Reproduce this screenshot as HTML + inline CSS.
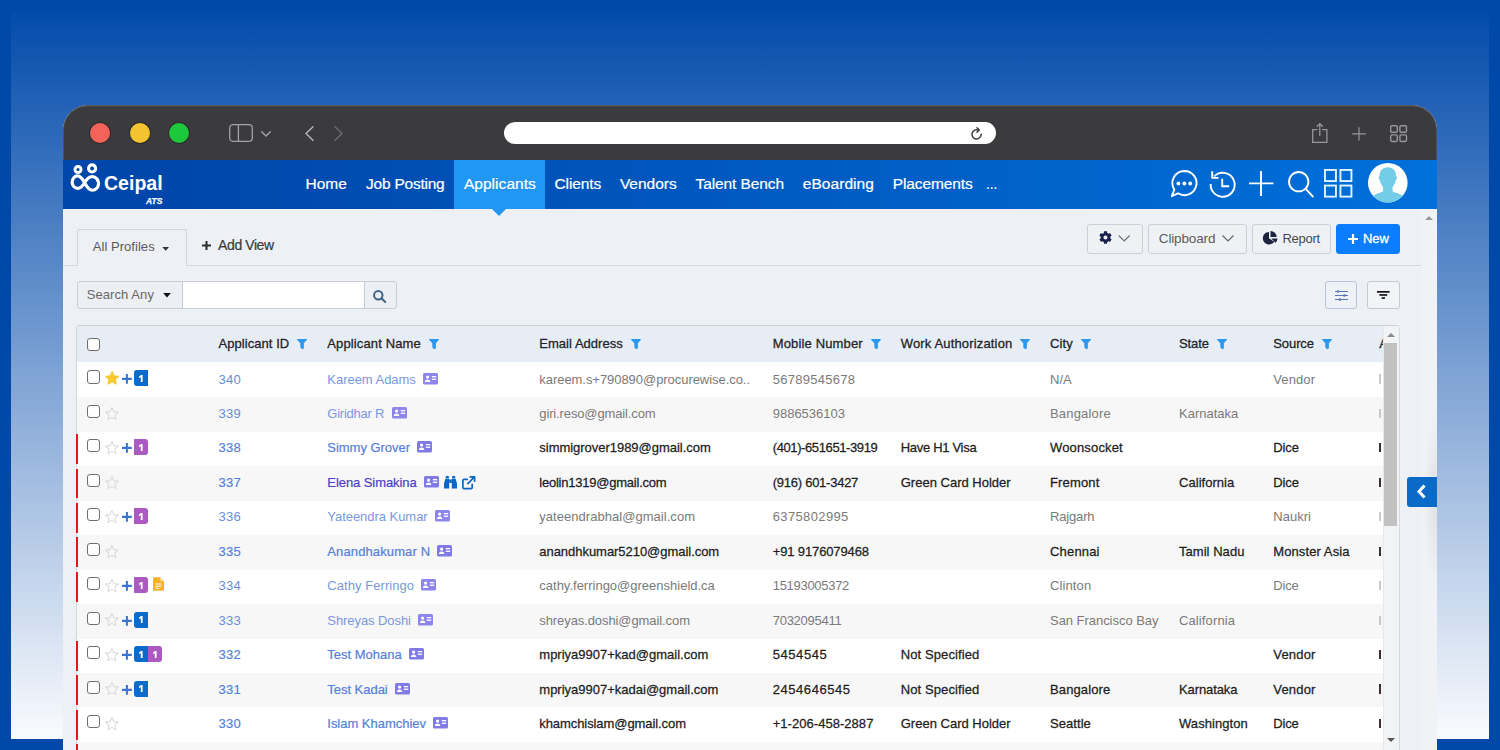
<!DOCTYPE html><html><head><meta charset="utf-8"><title>Ceipal ATS</title><style>
*{box-sizing:border-box;margin:0;padding:0}
html,body{width:1500px;height:750px;overflow:hidden;background:#0049A9;font-family:"Liberation Sans",sans-serif;}
.bg{position:absolute;left:11px;top:11px;width:1478px;height:728px;background:linear-gradient(180deg,#034BAB 0%,#FAFBFE 100%);}
.win{position:absolute;left:63px;top:105px;width:1374px;height:661px;border-radius:25px 25px 0 0;overflow:hidden;background:#EDF0F4;}
.pg{position:absolute;left:-63px;top:-105px;width:1500px;height:800px;}
.pg>*,.a{position:absolute}
.t{position:absolute;white-space:nowrap;}
.tb{left:63px;top:105px;width:1374px;height:55px;background:#3B3B3D;border-radius:25px 25px 0 0;box-shadow:inset 0 1.2px 0 0 #5A5A5E,inset 1px 0 0 0 #505054,inset -1px 0 0 0 #505054}
.dot{top:123px;width:20px;height:20px;border-radius:50%;box-shadow:0 0 0 1px rgba(0,0,0,.25)}
.url{left:504px;top:122px;width:492px;height:22.300px;border-radius:11.200px;background:#fff;}
.nav{left:63px;top:160px;width:1374px;height:49px;background:linear-gradient(90deg,#0047AB 0%,#0047AB 9%,#0070DA 100%);}
.act{left:454px;top:160px;width:91px;height:49px;background:#2196F3;}
.tri{left:492px;top:209px;width:0;height:0;border-left:7.5px solid transparent;border-right:7.5px solid transparent;border-top:7px solid #2196F3;}
.btn{border:1px solid #CBD0D6;border-radius:3px;background:#EFF2F5;height:29.5px;top:224px}
.hl{left:63px;top:265px;width:1358px;height:1px;background:#D5D9DE}
.tab{left:76.5px;top:229px;width:110.5px;height:37px;border:1px solid #D2D7DC;border-bottom:none;border-radius:3px 3px 0 0;background:#EDF0F4}
.sg{left:77px;top:281px;width:320px;height:28px;border:1px solid #C9CED5;border-radius:3px;background:#ECEFF3;overflow:hidden}
.tbl{left:76px;top:325px;width:1324px;height:440px;background:#fff;border-top:1px solid #C9D0D8;border-radius:4px 4px 0 0}
.th{left:76px;top:326px;width:1308px;height:36px;background:#E7EDF5;border-radius:3px 0 0 0}
.row{left:76px;width:1308px;}
.red{left:76px;width:2px;background:#F00F1C;z-index:2}
.cb{left:86.800px;width:13.200px;height:13.200px;border:1.400px solid #6E6E6E;border-radius:3px;background:#fff}
.bdg{width:13px;height:16px;border-radius:2px;color:#fff;font-size:10.5px;font-weight:bold;line-height:16px;text-align:center}
svg{position:absolute;overflow:visible}
</style></head><body>
<div class="bg"></div>
<div class="win"><div class="pg">
<div class="tb"></div>
<div class="dot" style="left:90.3px;background:#F4635A"></div>
<div class="dot" style="left:129.8px;background:#F4C430"></div>
<div class="dot" style="left:169.3px;background:#1EC83C"></div>
<svg style="left:229px;top:124px" width="24" height="18" viewBox="0 0 24 18" fill="none" stroke="#A3A3A5" stroke-width="1.3"><rect x="0.7" y="0.7" width="22.6" height="16.6" rx="3.2"/><path d="M9.4 0.7V17.3"/></svg>
<svg style="left:261px;top:130.5px" width="10" height="6" viewBox="0 0 10 6" fill="none" stroke="#A3A3A5" stroke-width="1.4" stroke-linecap="round" stroke-linejoin="round"><path d="M0.7 0.7L5 5L9.3 0.7"/></svg>
<svg style="left:305px;top:126px" width="9" height="15" viewBox="0 0 9 15" fill="none" stroke="#B4B4B6" stroke-width="1.5" stroke-linecap="round" stroke-linejoin="round"><path d="M8 0.8L1 7.5L8 14.2"/></svg>
<svg style="left:334px;top:126px" width="9" height="15" viewBox="0 0 9 15" fill="none" stroke="#6C6C6E" stroke-width="1.5" stroke-linecap="round" stroke-linejoin="round"><path d="M1 0.8L8 7.5L1 14.2"/></svg>
<div class="url"></div>
<svg style="left:970.900px;top:127.200px" width="12" height="13" viewBox="0 0 12 13" fill="none" stroke="#3E3E42" stroke-width="1.500" stroke-linecap="round"><path d="M10.2 7.3A4.6 4.6 0 1 1 7.6 3.2"/><path d="M6 0.8L8.3 3L6 5.2" stroke-linejoin="round"/></svg>
<svg style="left:1312.400px;top:122px" width="15.600" height="21" viewBox="0 0 15.600 21" fill="none" stroke="#98989A" stroke-width="1.300" stroke-linecap="round" stroke-linejoin="miter"><path d="M5 7.600H0.700V20.300H14.900V7.600H10.600"/><path d="M7.800 13.400V2M5.200 4.300L7.800 1.600L10.400 4.300" stroke-linejoin="round"/></svg>
<svg style="left:1352px;top:127px" width="14" height="13.600" viewBox="0 0 14 13.600" fill="none" stroke="#98989A" stroke-width="1.200" stroke-linecap="round"><path d="M7 0.500V13.100M0.500 6.800H13.500"/></svg>
<svg style="left:1390px;top:125px" width="17.200" height="17.200" viewBox="0 0 17.200 17.200" fill="none" stroke="#98989A" stroke-width="1.400"><rect x="0.700" y="0.700" width="6.600" height="6.600" rx="1.400"/><rect x="9.900" y="0.700" width="6.600" height="6.600" rx="1.400"/><rect x="0.700" y="9.900" width="6.600" height="6.600" rx="1.400"/><rect x="9.900" y="9.900" width="6.600" height="6.600" rx="1.400"/></svg>
<div class="nav"></div><div class="act"></div>
<svg style="left:70px;top:165px" width="32" height="28" viewBox="0 0 32 28" fill="none" stroke="#fff"><circle cx="8" cy="4.500" r="3.050" stroke-width="2.900"/><circle cx="22.100" cy="3.400" r="3.550" stroke-width="3.100"/><path d="M2.150 17.150C2.150 13.730 4.610 10.950 7.650 10.950C10.900 10.950 12.900 14.600 14.600 17.800C16.300 21 18.800 25.250 22.300 25.250C25.750 25.250 28.550 22.200 28.550 18.450C28.550 14.700 25.750 11.650 22.300 11.650C18.800 11.650 16.300 14.800 14.600 17.800C12.900 20.800 10.900 23.350 7.650 23.350C4.610 23.350 2.150 20.570 2.150 17.150Z" stroke-width="3.200"/></svg>
<span class="t" style="left:104.3px;transform:scaleX(0.930);transform-origin:0 0;top:171px;font-size:21px;line-height:23px;color:#fff;font-weight:bold;">Ceipal</span>
<span class="t" style="left:145.8px;transform:scaleX(0.891);transform-origin:0 0;top:195px;font-size:9.5px;line-height:11px;color:#fff;font-weight:bold;-webkit-text-stroke:0.25px #fff;font-style:italic;">ATS</span>
<span class="t" style="left:305.5px;letter-spacing:-0.01px;top:175px;font-size:15.5px;line-height:17px;color:#fff;-webkit-text-stroke:0.2px #fff;">Home</span>
<span class="t" style="left:366.0px;letter-spacing:-0.23px;top:175px;font-size:15.5px;line-height:17px;color:#fff;-webkit-text-stroke:0.2px #fff;">Job Posting</span>
<span class="t" style="left:463.9px;letter-spacing:0.05px;top:175px;font-size:15.5px;line-height:17px;color:#fff;-webkit-text-stroke:0.2px #fff;">Applicants</span>
<span class="t" style="left:554.5px;letter-spacing:-0.11px;top:175px;font-size:15.5px;line-height:17px;color:#fff;-webkit-text-stroke:0.2px #fff;">Clients</span>
<span class="t" style="left:619.9px;letter-spacing:-0.01px;top:175px;font-size:15.5px;line-height:17px;color:#fff;-webkit-text-stroke:0.2px #fff;">Vendors</span>
<span class="t" style="left:695.5px;letter-spacing:-0.10px;top:175px;font-size:15.5px;line-height:17px;color:#fff;-webkit-text-stroke:0.2px #fff;">Talent Bench</span>
<span class="t" style="left:802.7px;letter-spacing:0.07px;top:175px;font-size:15.5px;line-height:17px;color:#fff;-webkit-text-stroke:0.2px #fff;">eBoarding</span>
<span class="t" style="left:892.8px;letter-spacing:-0.11px;top:175px;font-size:15.5px;line-height:17px;color:#fff;-webkit-text-stroke:0.2px #fff;">Placements</span>
<span class="t" style="left:986.1px;transform:scaleX(0.867);transform-origin:0 0;top:175px;font-size:15.5px;line-height:17px;color:#fff;-webkit-text-stroke:0.2px #fff;">...</span>
<svg style="left:1171px;top:170px" width="27" height="27" viewBox="0 0 27 27" fill="none" stroke="#fff" stroke-width="1.9" stroke-linejoin="round"><path d="M13.500 1A12.100 12.100 0 1 1 6.900 23.300L0.800 26.200L3.300 19.600A12.100 12.100 0 0 1 13.500 1Z"/><circle cx="7.400" cy="13.500" r="1.900" fill="#fff" stroke="none"/><circle cx="13.300" cy="13.500" r="1.900" fill="#fff" stroke="none"/><circle cx="19.200" cy="13.500" r="1.900" fill="#fff" stroke="none"/></svg>
<svg style="left:1209px;top:169.800px" width="28" height="28" viewBox="0 0 28 28" fill="none" stroke="#fff" stroke-width="1.9" stroke-linecap="butt" stroke-linejoin="miter"><path d="M5.200 6.300A12 12 0 1 1 1.700 14"/><path d="M3.200 1.300V7.900H9.600"/><path d="M13.200 8.800V16.300H20.200"/></svg>
<svg style="left:1249px;top:171.200px" width="24.500" height="25" viewBox="0 0 24.500 25" fill="none" stroke="#fff" stroke-width="1.9"><path d="M12 0V25M0 12.400H24.500"/></svg>
<svg style="left:1287.500px;top:170.500px" width="26" height="27" viewBox="0 0 26 27" fill="none" stroke="#fff" stroke-width="1.900" stroke-linecap="round"><circle cx="10.700" cy="10.700" r="9.700"/><path d="M17.700 17.900L24.800 25.500"/></svg>
<svg style="left:1324px;top:169.300px" width="28.400" height="28.600" viewBox="0 0 28.400 28.600" fill="none" stroke="#E2F4FF" stroke-width="1.900"><rect x="0.950" y="0.950" width="11" height="11.100"/><rect x="16.450" y="0.950" width="11" height="11.100"/><rect x="0.950" y="16.550" width="11" height="11.100"/><rect x="16.450" y="16.550" width="11" height="11.100"/></svg>
<svg style="left:1367.500px;top:163px" width="39.600" height="39.600" viewBox="0 0 40 40"><defs><clipPath id="av"><circle cx="20" cy="20" r="20"/></clipPath></defs><circle cx="20" cy="20" r="20" fill="#fff"/><g clip-path="url(#av)" fill="#74CDE7"><path d="M20 4.200C25.600 4.200 28.300 8 28.300 13.200C29.600 13.600 29.400 16.600 28 17.400C27.500 21 25.800 23.300 24.800 24.200V28.600C27.200 30.400 32.500 30.800 35.400 33.600L38 42H2L4.600 33.600C7.500 30.800 12.800 30.400 15.200 28.600V24.200C14.200 23.300 12.500 21 12 17.400C10.600 16.600 10.400 13.600 11.700 13.200C11.700 8 14.400 4.200 20 4.200Z"/></g></svg>
<div class="tri"></div>
<div style="left:1421px;top:209px;width:16px;height:560px;background:#F0F2F5"></div>
<svg style="left:1424.5px;top:216px" width="8" height="4" viewBox="0 0 8 4"><path d="M0 4L4 0L8 4Z" fill="#9A9A9A"/></svg>
<div class="hl"></div>
<div class="tab"></div>
<span class="t" style="left:92.8px;letter-spacing:0.04px;top:239px;font-size:13px;line-height:15px;color:#5A5A5A;">All Profiles</span>
<svg style="left:162.400px;top:246.600px" width="7.400" height="3.800" viewBox="0 0 7 4"><path d="M0 0H7L3.500 4Z" fill="#333"/></svg>
<svg style="left:202.300px;top:241px" width="9" height="9" viewBox="0 0 10 10" stroke="#2E2E2E" stroke-width="2.300"><path d="M5 0V10M0 5H10"/></svg>
<span class="t" style="left:218.1px;letter-spacing:-0.42px;top:237px;font-size:14px;line-height:16px;color:#3A3A3A;-webkit-text-stroke:0.2px #3A3A3A;">Add View</span>
<div class="btn" style="left:1087px;width:56px"></div>
<div class="btn" style="left:1148px;width:99px"></div>
<div class="btn" style="left:1252px;width:79px"></div>
<div class="btn" style="left:1336px;width:64px;background:#0D7DFF;border-color:#0D7DFF"></div>
<svg style="left:1098.600px;top:230.900px" width="13" height="13" viewBox="0 0 512 512"><path fill="#17214A" d="M487.400 315.700l-42.600-24.600c4.300-23.200 4.300-47 0-70.200l42.600-24.600c4.900-2.800 7.100-8.600 5.500-14-11.100-35.600-30-67.800-54.700-94.600-3.800-4.100-10-5.100-14.800-2.300L380.800 110c-17.900-15.400-38.500-27.300-60.800-35.100V25.800c0-5.600-3.900-10.500-9.400-11.700-36.700-8.200-74.300-7.800-109.200 0-5.500 1.200-9.400 6.100-9.400 11.700V75c-22.200 7.900-42.800 19.800-60.800 35.100L88.700 85.500c-4.900-2.800-11-1.900-14.800 2.300-24.700 26.700-43.600 58.900-54.700 94.600-1.700 5.400.6 11.200 5.500 14L67.300 221c-4.300 23.200-4.300 47 0 70.200l-42.600 24.600c-4.900 2.800-7.100 8.600-5.500 14 11.100 35.600 30 67.800 54.700 94.600 3.800 4.100 10 5.100 14.800 2.300l42.600-24.600c17.900 15.400 38.500 27.300 60.800 35.100v49.200c0 5.600 3.900 10.500 9.400 11.700 36.700 8.200 74.300 7.800 109.200 0 5.500-1.200 9.400-6.100 9.400-11.700v-49.200c22.200-7.900 42.800-19.800 60.800-35.100l42.600 24.600c4.900 2.800 11 1.900 14.800-2.300 24.700-26.700 43.600-58.900 54.700-94.600 1.500-5.500-.7-11.300-5.600-14.100zM256 336c-44.100 0-80-35.900-80-80s35.900-80 80-80 80 35.900 80 80-35.900 80-80 80z"/></svg>
<svg style="left:1117.700px;top:234.800px" width="12.400" height="7" viewBox="0 0 12 7" fill="none" stroke="#707070" stroke-width="1.2"><path d="M0.500 0.500L6 6L11.500 0.500"/></svg>
<span class="t" style="left:1158.8px;letter-spacing:-0.14px;top:231px;font-size:13.5px;line-height:15px;color:#5C5C5C;">Clipboard</span>
<svg style="left:1222px;top:235px" width="12" height="7" viewBox="0 0 12 7" fill="none" stroke="#666" stroke-width="1.2"><path d="M0.500 0.500L6 6L11.500 0.500"/></svg>
<svg style="left:1263px;top:231px" width="14.500" height="13.500" viewBox="0 0 29 27"><g fill="#1E2340"><path d="M12 2A12.500 12.500 0 1 0 22.500 21.500L12 14.500Z"/><path d="M15 0V12H27.500A12.500 12.500 0 0 0 15 0Z"/><path d="M16.500 15H29A12.500 12.500 0 0 1 25 23.500Z"/></g></svg>
<span class="t" style="left:1282.4px;letter-spacing:-0.24px;top:231px;font-size:13px;line-height:15px;color:#484848;">Report</span>
<svg style="left:1347.5px;top:234px" width="10" height="10" viewBox="0 0 10 10" stroke="#fff" stroke-width="2.2"><path d="M5 0V10M0 5H10"/></svg>
<span class="t" style="left:1363.0px;transform:scaleX(0.961);transform-origin:0 0;top:231px;font-size:13.5px;line-height:15px;color:#fff;-webkit-text-stroke:0.3px #fff;">New</span>
<div class="sg"><div class="a" style="left:103.500px;top:-1px;width:183.500px;height:28px;background:#fff;border:1px solid #C4CAD2"></div></div>
<span class="t" style="left:86.7px;letter-spacing:0.08px;top:287px;font-size:13px;line-height:15px;color:#686868;">Search Any</span>
<svg style="left:162.500px;top:292.800px" width="8" height="4.400" viewBox="0 0 7 4"><path d="M0 0H7L3.500 4Z" fill="#111"/></svg>
<svg style="left:372.5px;top:290.3px" width="13.500" height="13" viewBox="0 0 13.500 13" fill="none" stroke="#3F6488" stroke-width="2" stroke-linecap="round"><circle cx="5.300" cy="5.300" r="4.200"/><path d="M8.600 8.500L12.300 12"/></svg>
<div class="btn" style="left:1325px;top:281px;width:32px;height:28px;border-color:#B9C2D6;background:#EEF1F6"></div>
<div class="btn" style="left:1367px;top:281px;width:33px;height:28px;border-color:#C4C9D2;background:#F2F4F7"></div>
<svg style="left:1335px;top:289.500px" width="13" height="11" viewBox="0 0 13 11" fill="none" stroke="#5876B4" stroke-width="1"><path d="M0 1.500H13M0 5.500H13M0 9.500H13"/><rect x="2" y="0.300" width="1.800" height="2.400" fill="#5876B4" stroke="none"/><rect x="8.500" y="4.300" width="1.800" height="2.400" fill="#5876B4" stroke="none"/><rect x="4" y="8.300" width="1.800" height="2.400" fill="#5876B4" stroke="none"/></svg>
<svg style="left:1377.300px;top:291.200px" width="12.600" height="8" viewBox="0 0 13 9" preserveAspectRatio="none" fill="#111"><rect x="0" y="0" width="13" height="1.900"/><rect x="2.500" y="3.500" width="8" height="1.900"/><rect x="4.800" y="7" width="3.400" height="1.900"/></svg>
<div class="tbl"></div><div class="th"></div>
<div class="cb" style="top:338px"></div>
<span class="t" style="left:218.5px;letter-spacing:0.06px;top:336px;font-size:13px;line-height:15px;color:#1F2328;-webkit-text-stroke:0.28px #1F2328;">Applicant ID</span>
<svg style="left:297.2px;top:338.7px" width="10" height="10.200" viewBox="0 0 10 10.200"><path d="M0.500 0H9.500Q10.400 0.100 9.700 1L6.900 4.300V9.300L5.700 10.200Q3.300 9 3.300 8.200V4.300L0.300 1Q-0.400 0.100 0.500 0Z" fill="#2B97EE"/></svg>
<span class="t" style="left:327.3px;letter-spacing:0.13px;top:336px;font-size:13px;line-height:15px;color:#1F2328;-webkit-text-stroke:0.28px #1F2328;">Applicant Name</span>
<svg style="left:428.7px;top:338.7px" width="10" height="10.200" viewBox="0 0 10 10.200"><path d="M0.500 0H9.500Q10.400 0.100 9.700 1L6.900 4.300V9.300L5.700 10.200Q3.300 9 3.300 8.200V4.300L0.300 1Q-0.400 0.100 0.500 0Z" fill="#2B97EE"/></svg>
<span class="t" style="left:539.3px;letter-spacing:0.03px;top:336px;font-size:13px;line-height:15px;color:#1F2328;-webkit-text-stroke:0.28px #1F2328;">Email Address</span>
<svg style="left:630.7px;top:338.7px" width="10" height="10.200" viewBox="0 0 10 10.200"><path d="M0.500 0H9.500Q10.400 0.100 9.700 1L6.900 4.300V9.300L5.700 10.200Q3.300 9 3.300 8.200V4.300L0.300 1Q-0.400 0.100 0.500 0Z" fill="#2B97EE"/></svg>
<span class="t" style="left:772.7px;letter-spacing:0.15px;top:336px;font-size:13px;line-height:15px;color:#1F2328;-webkit-text-stroke:0.28px #1F2328;">Mobile Number</span>
<svg style="left:870.7px;top:338.7px" width="10" height="10.200" viewBox="0 0 10 10.200"><path d="M0.500 0H9.500Q10.400 0.100 9.700 1L6.900 4.300V9.300L5.700 10.200Q3.300 9 3.300 8.200V4.300L0.300 1Q-0.400 0.100 0.500 0Z" fill="#2B97EE"/></svg>
<span class="t" style="left:900.7px;letter-spacing:0.16px;top:336px;font-size:13px;line-height:15px;color:#1F2328;-webkit-text-stroke:0.28px #1F2328;">Work Authorization</span>
<svg style="left:1020.2px;top:338.7px" width="10" height="10.200" viewBox="0 0 10 10.200"><path d="M0.500 0H9.500Q10.400 0.100 9.700 1L6.900 4.300V9.300L5.700 10.200Q3.300 9 3.300 8.200V4.300L0.300 1Q-0.400 0.100 0.500 0Z" fill="#2B97EE"/></svg>
<span class="t" style="left:1050.0px;letter-spacing:0.10px;top:336px;font-size:13px;line-height:15px;color:#1F2328;-webkit-text-stroke:0.28px #1F2328;">City</span>
<svg style="left:1080.7px;top:338.7px" width="10" height="10.200" viewBox="0 0 10 10.200"><path d="M0.500 0H9.500Q10.400 0.100 9.700 1L6.900 4.300V9.300L5.700 10.200Q3.300 9 3.300 8.200V4.300L0.300 1Q-0.400 0.100 0.500 0Z" fill="#2B97EE"/></svg>
<span class="t" style="left:1179.0px;letter-spacing:-0.09px;top:336px;font-size:13px;line-height:15px;color:#1F2328;-webkit-text-stroke:0.28px #1F2328;">State</span>
<svg style="left:1216.8px;top:338.7px" width="10" height="10.200" viewBox="0 0 10 10.200"><path d="M0.500 0H9.500Q10.400 0.100 9.700 1L6.900 4.300V9.300L5.700 10.200Q3.300 9 3.300 8.200V4.300L0.300 1Q-0.400 0.100 0.500 0Z" fill="#2B97EE"/></svg>
<span class="t" style="left:1273.3px;letter-spacing:-0.10px;top:336px;font-size:13px;line-height:15px;color:#1F2328;-webkit-text-stroke:0.28px #1F2328;">Source</span>
<svg style="left:1321.8px;top:338.7px" width="10" height="10.200" viewBox="0 0 10 10.200"><path d="M0.500 0H9.500Q10.400 0.100 9.700 1L6.900 4.300V9.300L5.700 10.200Q3.300 9 3.300 8.200V4.300L0.300 1Q-0.400 0.100 0.500 0Z" fill="#2B97EE"/></svg>
<span class="t" style="left:1379.3px;letter-spacing:0.00px;top:336px;font-size:13px;line-height:15px;color:#1F2328;-webkit-text-stroke:0.28px #1F2328;">A</span>
<div class="row" style="top:362.00px;height:35.85px;background:#fff"></div>
<div class="cb" style="top:370.4px"></div>
<svg style="left:104.900px;top:371.4px" width="14.300" height="13.800" viewBox="0 0 14 13.400"><path d="M7 0.6L8.900 4.700L13.400 5.200L10.100 8.300L11 12.800L7 10.500L3 12.800L3.900 8.300L0.600 5.200L5.100 4.700Z" fill="#F7CA33" stroke="#F7CA33" stroke-width="1.100" stroke-linejoin="round"/></svg>
<svg style="left:122px;top:374.4px" width="9.800" height="9.800" viewBox="0 0 10 10" stroke="#3A74D2" stroke-width="2.100"><path d="M5 0V10M0 5H10"/></svg>
<div class="bdg a" style="left:134.3px;top:370.4px;width:13.8px;background:#0A6BCB;border-radius:3px 0 0 3px"><svg style="left:5.10px;top:4.600px" width="3.600" height="6.900" viewBox="0 0 3.600 6.900"><path d="M1.900 0H3.600V6.900H1.800V2.300L0 3V1.400Q1.300 0.900 1.900 0Z" fill="#fff"/></svg></div>
<span class="t" style="left:218.5px;letter-spacing:0.26px;top:372px;font-size:13px;line-height:15px;color:#6A8CD9;">340</span>
<span class="t" style="left:327.3px;letter-spacing:-0.03px;top:372px;font-size:13px;line-height:15px;color:#7A98DE;">Kareem Adams</span>
<svg style="left:423.2px;top:372.5px" width="15" height="11.500" viewBox="0 0 15 11.500"><rect width="15" height="11.500" rx="1.600" fill="#8D86EA"/><circle cx="4.600" cy="4.100" r="1.600" fill="#fff"/><path d="M1.900 8.900Q1.900 6.400 4.600 6.400Q7.300 6.400 7.300 8.900Z" fill="#fff"/><rect x="8.800" y="3" width="4.400" height="1.300" fill="#fff"/><rect x="8.800" y="5.600" width="4.400" height="1.300" fill="#fff"/><rect x="8.800" y="8" width="3" height="1" fill="#fff" opacity="0"/></svg>
<span class="t" style="left:539.3px;letter-spacing:-0.05px;top:372px;font-size:13px;line-height:15px;color:#7A7A7A;">kareem.s+790890@procurewise.co..</span>
<span class="t" style="left:772.7px;letter-spacing:0.28px;top:372px;font-size:13px;line-height:15px;color:#7A7A7A;">56789545678</span>
<span class="t" style="left:1050.0px;letter-spacing:0.01px;top:372px;font-size:13px;line-height:15px;color:#7A7A7A;">N/A</span>
<span class="t" style="left:1273.3px;letter-spacing:0.10px;top:372px;font-size:13px;line-height:15px;color:#7A7A7A;">Vendor</span>
<div class="a" style="left:1379.300px;top:374.3px;width:2.200px;height:9.300px;background:#c9c9c9"></div>
<div class="row" style="top:397.35px;height:34.95px;background:#F7F7F7"></div>
<div class="cb" style="top:404.8px"></div>
<svg style="left:105.200px;top:406.7px" width="13.800" height="13.200" viewBox="0 0 14 13.400"><path d="M7 0.6L8.900 4.700L13.400 5.200L10.100 8.300L11 12.800L7 10.500L3 12.800L3.900 8.300L0.600 5.200L5.100 4.700Z" fill="none" stroke="#D9D9D9" stroke-width="1.050" stroke-linejoin="round"/></svg>
<span class="t" style="left:218.5px;letter-spacing:0.26px;top:406px;font-size:13px;line-height:15px;color:#6A8CD9;">339</span>
<span class="t" style="left:327.3px;letter-spacing:-0.25px;top:406px;font-size:13px;line-height:15px;color:#7A98DE;">Giridhar R</span>
<svg style="left:391.6px;top:406.9px" width="15" height="11.500" viewBox="0 0 15 11.500"><rect width="15" height="11.500" rx="1.600" fill="#8D86EA"/><circle cx="4.600" cy="4.100" r="1.600" fill="#fff"/><path d="M1.900 8.900Q1.900 6.400 4.600 6.400Q7.300 6.400 7.300 8.900Z" fill="#fff"/><rect x="8.800" y="3" width="4.400" height="1.300" fill="#fff"/><rect x="8.800" y="5.600" width="4.400" height="1.300" fill="#fff"/><rect x="8.800" y="8" width="3" height="1" fill="#fff" opacity="0"/></svg>
<span class="t" style="left:539.3px;letter-spacing:-0.13px;top:406px;font-size:13px;line-height:15px;color:#7A7A7A;">giri.reso@gmail.com</span>
<span class="t" style="left:772.7px;letter-spacing:0.00px;top:406px;font-size:13px;line-height:15px;color:#7A7A7A;">9886536103</span>
<span class="t" style="left:1050.0px;letter-spacing:0.18px;top:406px;font-size:13px;line-height:15px;color:#7A7A7A;">Bangalore</span>
<span class="t" style="left:1179.0px;letter-spacing:0.00px;top:406px;font-size:13px;line-height:15px;color:#7A7A7A;">Karnataka</span>
<div class="a" style="left:1379.300px;top:408.7px;width:2.200px;height:9.300px;background:#c9c9c9"></div>
<div class="row" style="top:431.80px;height:34.95px;background:#fff"></div>
<div class="red" style="top:434.10px;height:29.85px"></div>
<div class="cb" style="top:439.3px"></div>
<svg style="left:105.200px;top:441.2px" width="13.800" height="13.200" viewBox="0 0 14 13.400"><path d="M7 0.6L8.900 4.700L13.400 5.200L10.100 8.300L11 12.800L7 10.500L3 12.800L3.900 8.300L0.600 5.200L5.100 4.700Z" fill="none" stroke="#D9D9D9" stroke-width="1.050" stroke-linejoin="round"/></svg>
<svg style="left:122px;top:443.3px" width="9.800" height="9.800" viewBox="0 0 10 10" stroke="#3A74D2" stroke-width="2.100"><path d="M5 0V10M0 5H10"/></svg>
<div class="bdg a" style="left:134.3px;top:439.3px;width:13.8px;background:#AC5AC2;border-radius:0 3px 3px 0"><svg style="left:5.10px;top:4.600px" width="3.600" height="6.900" viewBox="0 0 3.600 6.900"><path d="M1.900 0H3.600V6.900H1.800V2.300L0 3V1.400Q1.300 0.900 1.900 0Z" fill="#fff"/></svg></div>
<span class="t" style="left:218.5px;letter-spacing:0.26px;top:440px;font-size:13px;line-height:15px;color:#5580D8;-webkit-text-stroke:0.156px #5580D8;">338</span>
<span class="t" style="left:327.3px;letter-spacing:-0.03px;top:440px;font-size:13px;line-height:15px;color:#5580D8;-webkit-text-stroke:0.20800000000000002px #5580D8;">Simmy Grover</span>
<svg style="left:417.3px;top:441.4px" width="15" height="11.500" viewBox="0 0 15 11.500"><rect width="15" height="11.500" rx="1.600" fill="#7F7AE6"/><circle cx="4.600" cy="4.100" r="1.600" fill="#fff"/><path d="M1.900 8.900Q1.900 6.400 4.600 6.400Q7.300 6.400 7.300 8.900Z" fill="#fff"/><rect x="8.800" y="3" width="4.400" height="1.300" fill="#fff"/><rect x="8.800" y="5.600" width="4.400" height="1.300" fill="#fff"/><rect x="8.800" y="8" width="3" height="1" fill="#fff" opacity="0"/></svg>
<span class="t" style="left:539.3px;letter-spacing:-0.03px;top:440px;font-size:13px;line-height:15px;color:#1E1E1E;-webkit-text-stroke:0.26px #1E1E1E;">simmigrover1989@gmail.com</span>
<span class="t" style="left:772.7px;letter-spacing:-0.39px;top:440px;font-size:13px;line-height:15px;color:#1E1E1E;-webkit-text-stroke:0.26px #1E1E1E;">(401)-651651-3919</span>
<span class="t" style="left:900.7px;letter-spacing:-0.30px;top:440px;font-size:13px;line-height:15px;color:#1E1E1E;-webkit-text-stroke:0.26px #1E1E1E;">Have H1 Visa</span>
<span class="t" style="left:1050.0px;letter-spacing:0.16px;top:440px;font-size:13px;line-height:15px;color:#1E1E1E;-webkit-text-stroke:0.26px #1E1E1E;">Woonsocket</span>
<span class="t" style="left:1273.3px;letter-spacing:-0.10px;top:440px;font-size:13px;line-height:15px;color:#1E1E1E;-webkit-text-stroke:0.26px #1E1E1E;">Dice</span>
<div class="a" style="left:1379.300px;top:443.2px;width:2.200px;height:9.300px;background:#3a2f33"></div>
<div class="row" style="top:466.25px;height:34.95px;background:#F7F7F7"></div>
<div class="red" style="top:468.55px;height:29.85px"></div>
<div class="cb" style="top:473.8px"></div>
<svg style="left:105.200px;top:475.6px" width="13.800" height="13.200" viewBox="0 0 14 13.400"><path d="M7 0.6L8.900 4.700L13.400 5.200L10.100 8.300L11 12.800L7 10.500L3 12.800L3.900 8.300L0.600 5.200L5.100 4.700Z" fill="none" stroke="#D9D9D9" stroke-width="1.050" stroke-linejoin="round"/></svg>
<span class="t" style="left:218.5px;letter-spacing:0.26px;top:475px;font-size:13px;line-height:15px;color:#5580D8;-webkit-text-stroke:0.156px #5580D8;">337</span>
<span class="t" style="left:327.3px;letter-spacing:-0.07px;top:475px;font-size:13px;line-height:15px;color:#4E3DCB;-webkit-text-stroke:0.20800000000000002px #4E3DCB;">Elena Simakina</span>
<svg style="left:424.0px;top:475.9px" width="15" height="11.500" viewBox="0 0 15 11.500"><rect width="15" height="11.500" rx="1.600" fill="#7F7AE6"/><circle cx="4.600" cy="4.100" r="1.600" fill="#fff"/><path d="M1.900 8.900Q1.900 6.400 4.600 6.400Q7.300 6.400 7.300 8.900Z" fill="#fff"/><rect x="8.800" y="3" width="4.400" height="1.300" fill="#fff"/><rect x="8.800" y="5.600" width="4.400" height="1.300" fill="#fff"/><rect x="8.800" y="8" width="3" height="1" fill="#fff" opacity="0"/></svg>
<svg style="left:444px;top:476.1px" width="13" height="12.500" viewBox="0 0 13 12.500" fill="#0A66C2"><rect x="1.800" y="0" width="3" height="2"/><rect x="8.200" y="0" width="3" height="2"/><path d="M1.500 2.500H5.200V12.500H0V7.500Z"/><path d="M7.800 2.500H11.500L13 7.500V12.500H7.800Z"/><rect x="5.200" y="3.500" width="2.600" height="3.500"/></svg>
<svg style="left:462.300px;top:475.6px" width="13.500" height="13.500" viewBox="0 0 13.500 13.500" fill="none" stroke="#0A66C2" stroke-width="1.700" stroke-linecap="round" stroke-linejoin="round"><path d="M10.200 8.300V11.400Q10.200 12.600 9 12.600H2.100Q0.900 12.600 0.900 11.400V4.500Q0.900 3.300 2.100 3.300H5.200"/><path d="M8.300 0.900H12.600V5.200M12.300 1.200L5.800 7.700"/></svg>
<span class="t" style="left:539.3px;letter-spacing:-0.23px;top:475px;font-size:13px;line-height:15px;color:#1E1E1E;-webkit-text-stroke:0.26px #1E1E1E;">leolin1319@gmail.com</span>
<span class="t" style="left:772.7px;letter-spacing:-0.25px;top:475px;font-size:13px;line-height:15px;color:#1E1E1E;-webkit-text-stroke:0.26px #1E1E1E;">(916) 601-3427</span>
<span class="t" style="left:900.7px;letter-spacing:0.01px;top:475px;font-size:13px;line-height:15px;color:#1E1E1E;-webkit-text-stroke:0.26px #1E1E1E;">Green Card Holder</span>
<span class="t" style="left:1050.0px;letter-spacing:0.15px;top:475px;font-size:13px;line-height:15px;color:#1E1E1E;-webkit-text-stroke:0.26px #1E1E1E;">Fremont</span>
<span class="t" style="left:1179.0px;letter-spacing:0.04px;top:475px;font-size:13px;line-height:15px;color:#1E1E1E;-webkit-text-stroke:0.26px #1E1E1E;">California</span>
<span class="t" style="left:1273.3px;letter-spacing:-0.10px;top:475px;font-size:13px;line-height:15px;color:#1E1E1E;-webkit-text-stroke:0.26px #1E1E1E;">Dice</span>
<div class="a" style="left:1379.300px;top:477.6px;width:2.200px;height:9.300px;background:#3a2f33"></div>
<div class="row" style="top:500.70px;height:34.95px;background:#fff"></div>
<div class="red" style="top:503.00px;height:29.85px"></div>
<div class="cb" style="top:508.2px"></div>
<svg style="left:105.200px;top:510.1px" width="13.800" height="13.200" viewBox="0 0 14 13.400"><path d="M7 0.6L8.900 4.700L13.400 5.200L10.100 8.300L11 12.800L7 10.500L3 12.800L3.900 8.300L0.600 5.200L5.100 4.700Z" fill="none" stroke="#D9D9D9" stroke-width="1.050" stroke-linejoin="round"/></svg>
<svg style="left:122px;top:512.2px" width="9.800" height="9.800" viewBox="0 0 10 10" stroke="#3A74D2" stroke-width="2.100"><path d="M5 0V10M0 5H10"/></svg>
<div class="bdg a" style="left:134.3px;top:508.2px;width:13.8px;background:#AC5AC2;border-radius:0 3px 3px 0"><svg style="left:5.10px;top:4.600px" width="3.600" height="6.900" viewBox="0 0 3.600 6.900"><path d="M1.900 0H3.600V6.900H1.800V2.300L0 3V1.400Q1.300 0.900 1.900 0Z" fill="#fff"/></svg></div>
<span class="t" style="left:218.5px;letter-spacing:0.26px;top:509px;font-size:13px;line-height:15px;color:#6A8CD9;">336</span>
<span class="t" style="left:327.3px;letter-spacing:-0.04px;top:509px;font-size:13px;line-height:15px;color:#7A98DE;">Yateendra Kumar</span>
<svg style="left:435.0px;top:510.3px" width="15" height="11.500" viewBox="0 0 15 11.500"><rect width="15" height="11.500" rx="1.600" fill="#8D86EA"/><circle cx="4.600" cy="4.100" r="1.600" fill="#fff"/><path d="M1.900 8.900Q1.900 6.400 4.600 6.400Q7.300 6.400 7.300 8.900Z" fill="#fff"/><rect x="8.800" y="3" width="4.400" height="1.300" fill="#fff"/><rect x="8.800" y="5.600" width="4.400" height="1.300" fill="#fff"/><rect x="8.800" y="8" width="3" height="1" fill="#fff" opacity="0"/></svg>
<span class="t" style="left:539.3px;letter-spacing:0.04px;top:509px;font-size:13px;line-height:15px;color:#7A7A7A;">yateendrabhal@gmail.com</span>
<span class="t" style="left:772.7px;letter-spacing:0.37px;top:509px;font-size:13px;line-height:15px;color:#7A7A7A;">6375802995</span>
<span class="t" style="left:1050.0px;letter-spacing:-0.16px;top:509px;font-size:13px;line-height:15px;color:#7A7A7A;">Rajgarh</span>
<span class="t" style="left:1273.3px;letter-spacing:0.03px;top:509px;font-size:13px;line-height:15px;color:#7A7A7A;">Naukri</span>
<div class="a" style="left:1379.300px;top:512.1px;width:2.200px;height:9.300px;background:#c9c9c9"></div>
<div class="row" style="top:535.15px;height:34.95px;background:#F7F7F7"></div>
<div class="red" style="top:537.45px;height:29.85px"></div>
<div class="cb" style="top:542.6px"></div>
<svg style="left:105.200px;top:544.5px" width="13.800" height="13.200" viewBox="0 0 14 13.400"><path d="M7 0.6L8.900 4.700L13.400 5.200L10.100 8.300L11 12.800L7 10.500L3 12.800L3.900 8.300L0.600 5.200L5.100 4.700Z" fill="none" stroke="#D9D9D9" stroke-width="1.050" stroke-linejoin="round"/></svg>
<span class="t" style="left:218.5px;letter-spacing:0.26px;top:544px;font-size:13px;line-height:15px;color:#5580D8;-webkit-text-stroke:0.156px #5580D8;">335</span>
<span class="t" style="left:327.3px;letter-spacing:0.12px;top:544px;font-size:13px;line-height:15px;color:#5580D8;-webkit-text-stroke:0.20800000000000002px #5580D8;">Anandhakumar N</span>
<svg style="left:437.3px;top:544.8px" width="15" height="11.500" viewBox="0 0 15 11.500"><rect width="15" height="11.500" rx="1.600" fill="#7F7AE6"/><circle cx="4.600" cy="4.100" r="1.600" fill="#fff"/><path d="M1.900 8.900Q1.900 6.400 4.600 6.400Q7.300 6.400 7.300 8.900Z" fill="#fff"/><rect x="8.800" y="3" width="4.400" height="1.300" fill="#fff"/><rect x="8.800" y="5.600" width="4.400" height="1.300" fill="#fff"/><rect x="8.800" y="8" width="3" height="1" fill="#fff" opacity="0"/></svg>
<span class="t" style="left:539.3px;letter-spacing:-0.04px;top:544px;font-size:13px;line-height:15px;color:#1E1E1E;-webkit-text-stroke:0.26px #1E1E1E;">anandhkumar5210@gmail.com</span>
<span class="t" style="left:772.7px;letter-spacing:-0.13px;top:544px;font-size:13px;line-height:15px;color:#1E1E1E;-webkit-text-stroke:0.26px #1E1E1E;">+91 9176079468</span>
<span class="t" style="left:1050.0px;letter-spacing:0.18px;top:544px;font-size:13px;line-height:15px;color:#1E1E1E;-webkit-text-stroke:0.26px #1E1E1E;">Chennai</span>
<span class="t" style="left:1179.0px;letter-spacing:0.04px;top:544px;font-size:13px;line-height:15px;color:#1E1E1E;-webkit-text-stroke:0.26px #1E1E1E;">Tamil Nadu</span>
<span class="t" style="left:1273.3px;letter-spacing:0.09px;top:544px;font-size:13px;line-height:15px;color:#1E1E1E;-webkit-text-stroke:0.26px #1E1E1E;">Monster Asia</span>
<div class="a" style="left:1379.300px;top:546.6px;width:2.200px;height:9.300px;background:#3a2f33"></div>
<div class="row" style="top:569.60px;height:34.95px;background:#fff"></div>
<div class="red" style="top:571.90px;height:29.85px"></div>
<div class="cb" style="top:577.1px"></div>
<svg style="left:105.200px;top:579.0px" width="13.800" height="13.200" viewBox="0 0 14 13.400"><path d="M7 0.6L8.900 4.700L13.400 5.200L10.100 8.300L11 12.800L7 10.500L3 12.800L3.900 8.300L0.600 5.200L5.100 4.700Z" fill="none" stroke="#D9D9D9" stroke-width="1.050" stroke-linejoin="round"/></svg>
<svg style="left:122px;top:581.1px" width="9.800" height="9.800" viewBox="0 0 10 10" stroke="#3A74D2" stroke-width="2.100"><path d="M5 0V10M0 5H10"/></svg>
<div class="bdg a" style="left:134.3px;top:577.1px;width:13.8px;background:#AC5AC2;border-radius:0 3px 3px 0"><svg style="left:5.10px;top:4.600px" width="3.600" height="6.900" viewBox="0 0 3.600 6.900"><path d="M1.900 0H3.600V6.900H1.800V2.300L0 3V1.400Q1.300 0.900 1.900 0Z" fill="#fff"/></svg></div>
<svg style="left:153.200px;top:577.0px" width="11" height="14" viewBox="0 0 11.500 14"><path d="M1 0H7.500L11.500 4V13Q11.500 14 10.500 14H1Q0 14 0 13V1Q0 0 1 0Z" fill="#F6B225"/><path d="M7.500 0V4H11.500Z" fill="#FBDB94"/><rect x="2.500" y="6.500" width="6.500" height="1" fill="#fff"/><rect x="2.500" y="8.800" width="6.500" height="1" fill="#fff"/><rect x="2.500" y="11" width="4" height="1" fill="#fff"/></svg>
<span class="t" style="left:218.5px;letter-spacing:0.26px;top:578px;font-size:13px;line-height:15px;color:#6A8CD9;">334</span>
<span class="t" style="left:327.3px;letter-spacing:0.06px;top:578px;font-size:13px;line-height:15px;color:#7A98DE;">Cathy Ferringo</span>
<svg style="left:421.3px;top:579.2px" width="15" height="11.500" viewBox="0 0 15 11.500"><rect width="15" height="11.500" rx="1.600" fill="#8D86EA"/><circle cx="4.600" cy="4.100" r="1.600" fill="#fff"/><path d="M1.900 8.900Q1.900 6.400 4.600 6.400Q7.300 6.400 7.300 8.900Z" fill="#fff"/><rect x="8.800" y="3" width="4.400" height="1.300" fill="#fff"/><rect x="8.800" y="5.600" width="4.400" height="1.300" fill="#fff"/><rect x="8.800" y="8" width="3" height="1" fill="#fff" opacity="0"/></svg>
<span class="t" style="left:539.3px;letter-spacing:0.00px;top:578px;font-size:13px;line-height:15px;color:#7A7A7A;">cathy.ferringo@greenshield.ca</span>
<span class="t" style="left:772.7px;letter-spacing:-0.29px;top:578px;font-size:13px;line-height:15px;color:#7A7A7A;">15193005372</span>
<span class="t" style="left:1050.0px;letter-spacing:0.12px;top:578px;font-size:13px;line-height:15px;color:#7A7A7A;">Clinton</span>
<span class="t" style="left:1273.3px;letter-spacing:-0.17px;top:578px;font-size:13px;line-height:15px;color:#7A7A7A;">Dice</span>
<div class="a" style="left:1379.300px;top:581.0px;width:2.200px;height:9.300px;background:#c9c9c9"></div>
<div class="row" style="top:604.05px;height:34.95px;background:#F7F7F7"></div>
<div class="cb" style="top:611.5px"></div>
<svg style="left:105.200px;top:613.4px" width="13.800" height="13.200" viewBox="0 0 14 13.400"><path d="M7 0.6L8.900 4.700L13.400 5.200L10.100 8.300L11 12.800L7 10.500L3 12.800L3.900 8.300L0.600 5.200L5.100 4.700Z" fill="none" stroke="#D9D9D9" stroke-width="1.050" stroke-linejoin="round"/></svg>
<svg style="left:122px;top:615.5px" width="9.800" height="9.800" viewBox="0 0 10 10" stroke="#3A74D2" stroke-width="2.100"><path d="M5 0V10M0 5H10"/></svg>
<div class="bdg a" style="left:134.3px;top:611.5px;width:13.8px;background:#0A6BCB;border-radius:3px 0 0 3px"><svg style="left:5.10px;top:4.600px" width="3.600" height="6.900" viewBox="0 0 3.600 6.900"><path d="M1.900 0H3.600V6.900H1.800V2.300L0 3V1.400Q1.300 0.900 1.900 0Z" fill="#fff"/></svg></div>
<span class="t" style="left:218.5px;letter-spacing:0.26px;top:613px;font-size:13px;line-height:15px;color:#6A8CD9;">333</span>
<span class="t" style="left:327.3px;letter-spacing:-0.07px;top:613px;font-size:13px;line-height:15px;color:#7A98DE;">Shreyas Doshi</span>
<svg style="left:418.3px;top:613.6px" width="15" height="11.500" viewBox="0 0 15 11.500"><rect width="15" height="11.500" rx="1.600" fill="#8D86EA"/><circle cx="4.600" cy="4.100" r="1.600" fill="#fff"/><path d="M1.900 8.900Q1.900 6.400 4.600 6.400Q7.300 6.400 7.300 8.900Z" fill="#fff"/><rect x="8.800" y="3" width="4.400" height="1.300" fill="#fff"/><rect x="8.800" y="5.600" width="4.400" height="1.300" fill="#fff"/><rect x="8.800" y="8" width="3" height="1" fill="#fff" opacity="0"/></svg>
<span class="t" style="left:539.3px;letter-spacing:-0.09px;top:613px;font-size:13px;line-height:15px;color:#7A7A7A;">shreyas.doshi@gmail.com</span>
<span class="t" style="left:772.7px;letter-spacing:-0.26px;top:613px;font-size:13px;line-height:15px;color:#7A7A7A;">7032095411</span>
<span class="t" style="left:1050.0px;letter-spacing:-0.04px;top:613px;font-size:13px;line-height:15px;color:#7A7A7A;">San Francisco Bay</span>
<span class="t" style="left:1179.0px;letter-spacing:0.12px;top:613px;font-size:13px;line-height:15px;color:#7A7A7A;">California</span>
<div class="a" style="left:1379.300px;top:615.5px;width:2.200px;height:9.300px;background:#c9c9c9"></div>
<div class="row" style="top:638.50px;height:34.95px;background:#fff"></div>
<div class="red" style="top:640.80px;height:29.85px"></div>
<div class="cb" style="top:646.0px"></div>
<svg style="left:105.200px;top:647.9px" width="13.800" height="13.200" viewBox="0 0 14 13.400"><path d="M7 0.6L8.900 4.700L13.400 5.200L10.100 8.300L11 12.800L7 10.500L3 12.800L3.900 8.300L0.600 5.200L5.100 4.700Z" fill="none" stroke="#D9D9D9" stroke-width="1.050" stroke-linejoin="round"/></svg>
<svg style="left:122px;top:650.0px" width="9.800" height="9.800" viewBox="0 0 10 10" stroke="#3A74D2" stroke-width="2.100"><path d="M5 0V10M0 5H10"/></svg>
<div class="bdg a" style="left:134.3px;top:646.0px;width:14.0px;background:#0A6BCB;border-radius:3px 0 0 3px"><svg style="left:5.20px;top:4.600px" width="3.600" height="6.900" viewBox="0 0 3.600 6.900"><path d="M1.900 0H3.600V6.900H1.800V2.300L0 3V1.400Q1.300 0.900 1.900 0Z" fill="#fff"/></svg></div>
<div class="bdg a" style="left:148.3px;top:646.0px;width:14.0px;background:#AC5AC2;border-radius:0 3px 3px 0"><svg style="left:5.20px;top:4.600px" width="3.600" height="6.900" viewBox="0 0 3.600 6.900"><path d="M1.900 0H3.600V6.900H1.800V2.300L0 3V1.400Q1.300 0.900 1.900 0Z" fill="#fff"/></svg></div>
<span class="t" style="left:218.5px;letter-spacing:0.26px;top:647px;font-size:13px;line-height:15px;color:#5580D8;-webkit-text-stroke:0.156px #5580D8;">332</span>
<span class="t" style="left:327.3px;letter-spacing:-0.00px;top:647px;font-size:13px;line-height:15px;color:#5580D8;-webkit-text-stroke:0.20800000000000002px #5580D8;">Test Mohana</span>
<svg style="left:409.0px;top:648.1px" width="15" height="11.500" viewBox="0 0 15 11.500"><rect width="15" height="11.500" rx="1.600" fill="#7F7AE6"/><circle cx="4.600" cy="4.100" r="1.600" fill="#fff"/><path d="M1.900 8.900Q1.900 6.400 4.600 6.400Q7.300 6.400 7.300 8.900Z" fill="#fff"/><rect x="8.800" y="3" width="4.400" height="1.300" fill="#fff"/><rect x="8.800" y="5.600" width="4.400" height="1.300" fill="#fff"/><rect x="8.800" y="8" width="3" height="1" fill="#fff" opacity="0"/></svg>
<span class="t" style="left:539.3px;letter-spacing:0.00px;top:647px;font-size:13px;line-height:15px;color:#1E1E1E;-webkit-text-stroke:0.26px #1E1E1E;">mpriya9907+kad@gmail.com</span>
<span class="t" style="left:772.7px;letter-spacing:0.57px;top:647px;font-size:13px;line-height:15px;color:#1E1E1E;-webkit-text-stroke:0.26px #1E1E1E;">5454545</span>
<span class="t" style="left:900.7px;letter-spacing:0.11px;top:647px;font-size:13px;line-height:15px;color:#1E1E1E;-webkit-text-stroke:0.26px #1E1E1E;">Not Specified</span>
<span class="t" style="left:1273.3px;letter-spacing:0.18px;top:647px;font-size:13px;line-height:15px;color:#1E1E1E;-webkit-text-stroke:0.26px #1E1E1E;">Vendor</span>
<div class="a" style="left:1379.300px;top:649.9px;width:2.200px;height:9.300px;background:#3a2f33"></div>
<div class="row" style="top:672.95px;height:34.95px;background:#F7F7F7"></div>
<div class="red" style="top:675.25px;height:29.85px"></div>
<div class="cb" style="top:680.5px"></div>
<svg style="left:105.200px;top:682.4px" width="13.800" height="13.200" viewBox="0 0 14 13.400"><path d="M7 0.6L8.900 4.700L13.400 5.200L10.100 8.300L11 12.800L7 10.500L3 12.800L3.900 8.300L0.600 5.200L5.100 4.700Z" fill="none" stroke="#D9D9D9" stroke-width="1.050" stroke-linejoin="round"/></svg>
<svg style="left:122px;top:684.5px" width="9.800" height="9.800" viewBox="0 0 10 10" stroke="#3A74D2" stroke-width="2.100"><path d="M5 0V10M0 5H10"/></svg>
<div class="bdg a" style="left:134.3px;top:680.5px;width:13.8px;background:#0A6BCB;border-radius:3px 0 0 3px"><svg style="left:5.10px;top:4.600px" width="3.600" height="6.900" viewBox="0 0 3.600 6.900"><path d="M1.900 0H3.600V6.900H1.800V2.300L0 3V1.400Q1.300 0.900 1.900 0Z" fill="#fff"/></svg></div>
<span class="t" style="left:218.5px;letter-spacing:0.26px;top:682px;font-size:13px;line-height:15px;color:#5580D8;-webkit-text-stroke:0.156px #5580D8;">331</span>
<span class="t" style="left:327.3px;letter-spacing:-0.03px;top:682px;font-size:13px;line-height:15px;color:#5580D8;-webkit-text-stroke:0.20800000000000002px #5580D8;">Test Kadai</span>
<svg style="left:395.0px;top:682.6px" width="15" height="11.500" viewBox="0 0 15 11.500"><rect width="15" height="11.500" rx="1.600" fill="#7F7AE6"/><circle cx="4.600" cy="4.100" r="1.600" fill="#fff"/><path d="M1.900 8.900Q1.900 6.400 4.600 6.400Q7.300 6.400 7.300 8.900Z" fill="#fff"/><rect x="8.800" y="3" width="4.400" height="1.300" fill="#fff"/><rect x="8.800" y="5.600" width="4.400" height="1.300" fill="#fff"/><rect x="8.800" y="8" width="3" height="1" fill="#fff" opacity="0"/></svg>
<span class="t" style="left:539.3px;letter-spacing:-0.00px;top:682px;font-size:13px;line-height:15px;color:#1E1E1E;-webkit-text-stroke:0.26px #1E1E1E;">mpriya9907+kadai@gmail.com</span>
<span class="t" style="left:772.7px;letter-spacing:0.56px;top:682px;font-size:13px;line-height:15px;color:#1E1E1E;-webkit-text-stroke:0.26px #1E1E1E;">2454646545</span>
<span class="t" style="left:900.7px;letter-spacing:0.11px;top:682px;font-size:13px;line-height:15px;color:#1E1E1E;-webkit-text-stroke:0.26px #1E1E1E;">Not Specified</span>
<span class="t" style="left:1050.0px;letter-spacing:0.12px;top:682px;font-size:13px;line-height:15px;color:#1E1E1E;-webkit-text-stroke:0.26px #1E1E1E;">Bangalore</span>
<span class="t" style="left:1179.0px;letter-spacing:-0.11px;top:682px;font-size:13px;line-height:15px;color:#1E1E1E;-webkit-text-stroke:0.26px #1E1E1E;">Karnataka</span>
<span class="t" style="left:1273.3px;letter-spacing:0.18px;top:682px;font-size:13px;line-height:15px;color:#1E1E1E;-webkit-text-stroke:0.26px #1E1E1E;">Vendor</span>
<div class="a" style="left:1379.300px;top:684.4px;width:2.200px;height:9.300px;background:#3a2f33"></div>
<div class="row" style="top:707.40px;height:34.95px;background:#fff"></div>
<div class="red" style="top:709.70px;height:29.85px"></div>
<div class="cb" style="top:714.9px"></div>
<svg style="left:105.200px;top:716.8px" width="13.800" height="13.200" viewBox="0 0 14 13.400"><path d="M7 0.6L8.900 4.700L13.400 5.200L10.100 8.300L11 12.800L7 10.500L3 12.800L3.900 8.300L0.600 5.200L5.100 4.700Z" fill="none" stroke="#D9D9D9" stroke-width="1.050" stroke-linejoin="round"/></svg>
<span class="t" style="left:218.5px;letter-spacing:0.26px;top:716px;font-size:13px;line-height:15px;color:#5580D8;-webkit-text-stroke:0.156px #5580D8;">330</span>
<span class="t" style="left:327.3px;letter-spacing:-0.02px;top:716px;font-size:13px;line-height:15px;color:#5580D8;-webkit-text-stroke:0.20800000000000002px #5580D8;">Islam Khamchiev</span>
<svg style="left:433.3px;top:717.0px" width="15" height="11.500" viewBox="0 0 15 11.500"><rect width="15" height="11.500" rx="1.600" fill="#7F7AE6"/><circle cx="4.600" cy="4.100" r="1.600" fill="#fff"/><path d="M1.900 8.900Q1.900 6.400 4.600 6.400Q7.300 6.400 7.300 8.900Z" fill="#fff"/><rect x="8.800" y="3" width="4.400" height="1.300" fill="#fff"/><rect x="8.800" y="5.600" width="4.400" height="1.300" fill="#fff"/><rect x="8.800" y="8" width="3" height="1" fill="#fff" opacity="0"/></svg>
<span class="t" style="left:539.3px;letter-spacing:-0.08px;top:716px;font-size:13px;line-height:15px;color:#1E1E1E;-webkit-text-stroke:0.26px #1E1E1E;">khamchislam@gmail.com</span>
<span class="t" style="left:772.7px;letter-spacing:0.04px;top:716px;font-size:13px;line-height:15px;color:#1E1E1E;-webkit-text-stroke:0.26px #1E1E1E;">+1-206-458-2887</span>
<span class="t" style="left:900.7px;letter-spacing:0.01px;top:716px;font-size:13px;line-height:15px;color:#1E1E1E;-webkit-text-stroke:0.26px #1E1E1E;">Green Card Holder</span>
<span class="t" style="left:1050.0px;letter-spacing:0.06px;top:716px;font-size:13px;line-height:15px;color:#1E1E1E;-webkit-text-stroke:0.26px #1E1E1E;">Seattle</span>
<span class="t" style="left:1179.0px;letter-spacing:0.07px;top:716px;font-size:13px;line-height:15px;color:#1E1E1E;-webkit-text-stroke:0.26px #1E1E1E;">Washington</span>
<span class="t" style="left:1273.3px;letter-spacing:-0.17px;top:716px;font-size:13px;line-height:15px;color:#1E1E1E;-webkit-text-stroke:0.26px #1E1E1E;">Dice</span>
<div class="a" style="left:1379.300px;top:718.8px;width:2.200px;height:9.300px;background:#3a2f33"></div>
<div class="row" style="top:741.85px;height:34.95px;background:#F7F7F7"></div>
<div class="red" style="top:744.15px;height:29.85px"></div>
<div style="left:76px;top:327px;width:1.200px;height:440px;background:#D2D7DD;z-index:1"></div>
<div style="left:1383px;top:326px;width:16.500px;height:440px;background:#F2F3F4;border-left:1px solid #E8E8E8;border-radius:0 4px 0 0"></div>
<div style="left:1384px;top:343px;width:13px;height:182.500px;background:#C1C1C1"></div>
<svg style="left:1386.500px;top:333px" width="8" height="4" viewBox="0 0 8 4"><path d="M0 4L4 0L8 4Z" fill="#8A8A8A"/></svg>
<svg style="left:1386.500px;top:738px" width="8" height="4" viewBox="0 0 8 4"><path d="M0 0L4 4L8 0Z" fill="#555"/></svg>
<div style="left:1399.300px;top:328px;width:1px;height:440px;background:#D4D9DF"></div>
<div style="left:1423px;top:415px;width:14px;height:170px;background:radial-gradient(ellipse 14px 85px at 100% 50%,rgba(60,60,80,.10),rgba(60,60,80,0))"></div>
<div style="left:1407px;top:476.500px;width:31px;height:30.500px;background:#0B69C8;border-radius:3px 0 0 3px"></div>
<svg style="left:1417px;top:483.500px" width="9" height="15" viewBox="0 0 9 15" fill="none" stroke="#fff" stroke-width="3" stroke-linejoin="miter"><path d="M7.500 1.500L2 7.500L7.500 13.500"/></svg>
</div></div>
</body></html>
